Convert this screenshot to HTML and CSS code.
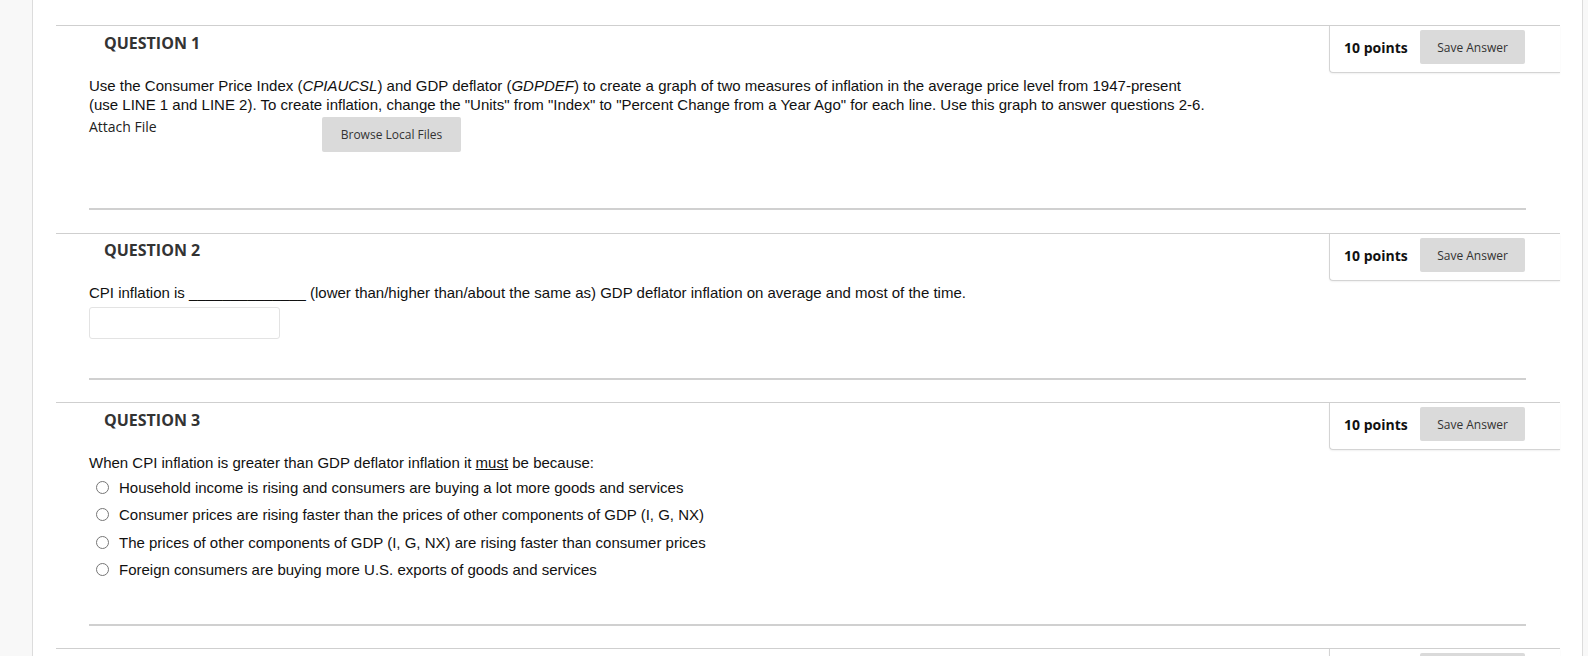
FILE: index.html
```html
<!DOCTYPE html>
<html>
<head>
<meta charset="utf-8">
<link rel="stylesheet" href="styles.css">
</head>
<body>
<div class="page">
  <div class="rail"></div>
  <main class="main">
    <section class="question q1">
      <div class="q-head">
        <h3 class="q-title">QUESTION 1</h3>
        <div class="points-box">
          <span class="points">10 points</span>
          <button class="btn save">Save Answer</button>
        </div>
      </div>
      <div class="q-body">
        <p class="q-text">Use the Consumer Price Index (<i>CPIAUCSL</i>) and GDP deflator (<i>GDPDEF</i>) to create a graph of two measures of inflation in the average price level from 1947-present<br>(use LINE 1 and LINE 2). To create inflation, change the "Units" from "Index" to "Percent Change from a Year Ago" for each line. Use this graph to answer questions 2-6.</p>
        <div class="attach">
          <span class="attach-label">Attach File</span>
          <button class="btn browse">Browse Local Files</button>
        </div>
      </div>
      <hr class="q-end">
    </section>

    <section class="question q2">
      <div class="q-head">
        <h3 class="q-title">QUESTION 2</h3>
        <div class="points-box">
          <span class="points">10 points</span>
          <button class="btn save">Save Answer</button>
        </div>
      </div>
      <div class="q-body">
        <p class="q-text">CPI inflation is ______________ (lower than/higher than/about the same as) GDP deflator inflation on average and most of the time.</p>
        <input class="answer" type="text">
      </div>
      <hr class="q-end">
    </section>

    <section class="question q3">
      <div class="q-head">
        <h3 class="q-title">QUESTION 3</h3>
        <div class="points-box">
          <span class="points">10 points</span>
          <button class="btn save">Save Answer</button>
        </div>
      </div>
      <div class="q-body">
        <p class="q-text">When CPI inflation is greater than GDP deflator inflation it <u>must</u> be because:</p>
        <ul class="options">
          <li><span class="radio"></span>Household income is rising and consumers are buying a lot more goods and services</li>
          <li><span class="radio"></span>Consumer prices are rising faster than the prices of other components of GDP (I, G, NX)</li>
          <li><span class="radio"></span>The prices of other components of GDP (I, G, NX) are rising faster than consumer prices</li>
          <li><span class="radio"></span>Foreign consumers are buying more U.S. exports of goods and services</li>
        </ul>
      </div>
      <hr class="q-end">
    </section>

    <section class="question q4">
      <div class="q-head">
        <h3 class="q-title">QUESTION 4</h3>
        <div class="points-box">
          <span class="points">10 points</span>
          <button class="btn save">Save Answer</button>
        </div>
      </div>
    </section>
  </main>
  <div class="rail-right"></div>
</div>
</body>
</html>
```

FILE: styles.css
```css
* { box-sizing: border-box; }
html, body { margin: 0; padding: 0; background: #fff; }
body { height: 656px; overflow: hidden; font-family: "Liberation Sans", Arial, sans-serif; color: #111; }

.page { display: flex; min-height: 656px; }
.rail { width: 33px; flex: none; background: #f8f8f8; border-right: 1px solid #dcdcdc; }
.rail-right { width: 6px; flex: none; background: #f8f8f8; border-left: 1px solid #dcdcdc; }
.main { flex: 1; padding: 25px 22px 0 23px; }

.question { border-top: 1px solid #cfcfcf; margin-bottom: 23px; }
.q2, .q3 { margin-bottom: 22px; }

.q-head { display: flex; justify-content: space-between; align-items: flex-start; }
.q-title {
  margin: 0; padding: 6px 0 0 48px;
  font-family: "Open Sans", sans-serif; font-weight: 700; font-size: 16px; line-height: 22px; color: #333;
}
.q2 .q-title { padding-top: 5px; }
.points-box {
  width: 231px; height: 47px; display: flex; align-items: center;
  padding: 0 35px 4px 14px;
  border-left: 1px solid #d4d4d4; border-bottom: 1px solid #d4d4d4;
  border-bottom-left-radius: 4px; box-shadow: 0 1px 2px rgba(0,0,0,0.06);
  background: #fff;
}
.points { font-family: "Open Sans", sans-serif; font-weight: 700; font-size: 14px; color: #111; flex: 1; }
.btn {
  border: none; border-radius: 2px; background: #dadada; color: #333;
  font-family: "Open Sans", sans-serif; font-size: 12px; padding: 0; cursor: pointer;
}
.save { width: 105px; height: 34px; }

.q-body { padding: 0 0 0 33px; }
.q-text { margin: 0; padding-top: 3px; font-size: 15px; line-height: 19px; }
.q2 .q-text { padding-top: 2px; }

.attach { display: flex; align-items: flex-start; margin-top: 3px; }
.attach-label { font-family: "Open Sans", sans-serif; font-size: 14px; line-height: 19px; width: 233px; color: #222; }
.browse { width: 139px; height: 35px; margin-top: 0; }

.answer {
  display: block; margin-top: 5px; width: 191px; height: 32px;
  border: 1px solid #e3e3e3; border-radius: 3px; background: #fff; outline: none;
}

.options { list-style: none; margin: 2px 0 0; padding: 0 0 0 7px; }
.options li { display: flex; align-items: center; height: 27.3px; font-size: 15px; }
.radio {
  width: 13px; height: 13px; border: 1px solid #767676; border-radius: 50%;
  margin-right: 10px; flex: none; background: #fff;
}

.q-end { margin: 0 34px 0 33px; border: none; border-top: 2px solid #d0d0d0; height: 0; }
.q1 .q-end { margin-top: 56px; }
.q2 .q-end { margin-top: 39px; }
.q3 .q-end { margin-top: 41px; }
.q4 .q-title { visibility: hidden; }
```
